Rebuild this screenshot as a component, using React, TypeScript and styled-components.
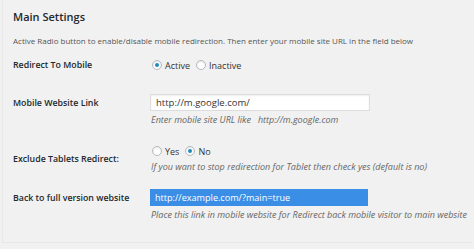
import styled, { createGlobalStyle } from "styled-components";

const GlobalStyle = createGlobalStyle`
  html, body {
    margin: 0;
    padding: 0;
    background: #f1f1f1;
  }
  body {
    font-family: "Open Sans", "Noto Sans", sans-serif;
    color: #444;
  }
`;

const Panel = styled.div`
  width: 471px;
  height: 243px;
  margin-left: 2px;
  border-left: 1px solid #e8e8e8;
  border-bottom: 1px solid #e6e6e6;
  background: #f1f1f1;
  padding: 8px 0 0 10px;
  box-sizing: border-box;
`;

const Title = styled.h3`
  margin: 0;
  font-size: 11px;
  line-height: 18px;
  font-weight: 600;
  color: #23282d;
`;

const Intro = styled.p`
  margin: 9px 0 0;
  font-size: 8px;
  line-height: 12px;
  color: #555;
`;

const Form = styled.div`
  display: grid;
  grid-template-columns: 137px 1fr;
  margin-top: 11px;
`;

const Label = styled.div<{ $offset?: number }>`
  font-size: 8.8px;
  font-weight: 600;
  color: #23282d;
  line-height: 14px;
  padding-top: ${({ $offset }) => $offset ?? 0}px;
`;

const Cell = styled.div<{ $gap: number }>`
  display: flex;
  flex-direction: column;
  padding-bottom: ${({ $gap }) => $gap}px;
`;

const RadioGroup = styled.div`
  display: flex;
  align-items: center;
  height: 14px;
  font-size: 9px;
  color: #333;
`;

const RadioOption = styled.label`
  display: flex;
  align-items: center;
  margin-right: 4px;
`;

const Radio = styled.span<{ $checked?: boolean }>`
  width: 8px;
  height: 8px;
  border-radius: 50%;
  border: 1px solid #b4b9be;
  background: #fff;
  box-shadow: inset 0 1px 2px rgba(0, 0, 0, 0.1);
  display: flex;
  align-items: center;
  justify-content: center;
  margin: 0 3px 0 2px;

  &::after {
    content: "";
    display: ${({ $checked }) => ($checked ? "block" : "none")};
    width: 4px;
    height: 4px;
    border-radius: 50%;
    background: #1e8cbe;
  }
`;

const TextInput = styled.div<{ $selected?: boolean; $width: number }>`
  width: ${({ $width }) => $width}px;
  height: 17px;
  box-sizing: border-box;
  border: 1px solid ${({ $selected }) => ($selected ? "#3a8ee6" : "#dddddd")};
  background: ${({ $selected }) => ($selected ? "#3a8ee6" : "#ffffff")};
  color: ${({ $selected }) => ($selected ? "#ffffff" : "#333")};
  font-size: ${({ $selected }) => ($selected ? 9.1 : 9.5)}px;
  line-height: 15px;
  padding-left: ${({ $selected }) => ($selected ? 4 : 5)}px;
  box-shadow: ${({ $selected }) => ($selected ? "none" : "inset 0 1px 2px rgba(0,0,0,0.07)")};
`;

const Hint = styled.p`
  margin: 3px 0 0 1px;
  font-size: 9px;
  line-height: 12px;
  font-style: italic;
  color: #666;
  white-space: pre;
`;

export default function App() {
  return (
    <>
      <GlobalStyle />
      <Panel>
        <Title>Main Settings</Title>
        <Intro>
          Active Radio button to enable/disable mobile redirection. Then enter your mobile site URL in the field below
        </Intro>
        <Form>
          <Label>Redirect To Mobile</Label>
          <Cell $gap={22}>
            <RadioGroup>
              <RadioOption>
                <Radio $checked />
                Active
              </RadioOption>
              <RadioOption>
                <Radio />
                Inactive
              </RadioOption>
            </RadioGroup>
          </Cell>

          <Label $offset={2}>Mobile Website Link</Label>
          <Cell $gap={18}>
            <TextInput $width={220}>http://m.google.com/</TextInput>
            <Hint>Enter mobile site URL like   http://m.google.com</Hint>
          </Cell>

          <Label $offset={8}>Exclude Tablets Redirect:</Label>
          <Cell $gap={16}>
            <RadioGroup>
              <RadioOption>
                <Radio />
                Yes
              </RadioOption>
              <RadioOption>
                <Radio $checked />
                No
              </RadioOption>
            </RadioGroup>
            <Hint>If you want to stop redirection for Tablet then check yes (default is no)</Hint>
          </Cell>

          <Label $offset={2}>Back to full version website</Label>
          <Cell $gap={0}>
            <TextInput $selected $width={218}>http://example.com/?main=true</TextInput>
            <Hint>Place this link in mobile website for Redirect back mobile visitor to main website</Hint>
          </Cell>
        </Form>
      </Panel>
    </>
  );
}
